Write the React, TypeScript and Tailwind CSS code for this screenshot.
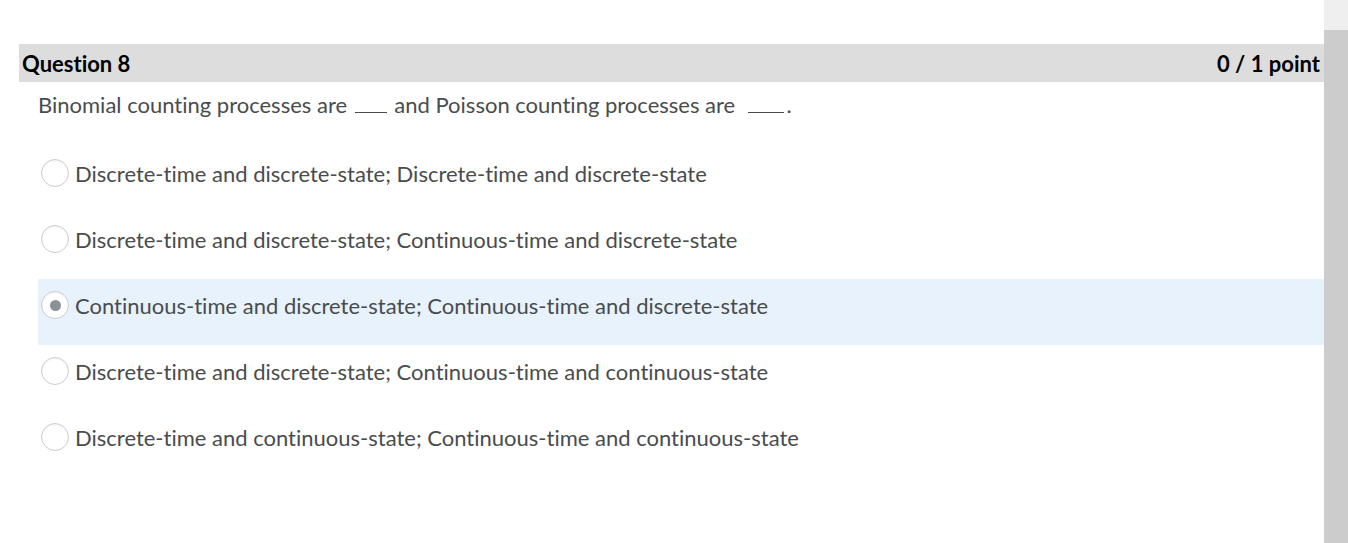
const options = [
  "Discrete-time and discrete-state; Discrete-time and discrete-state",
  "Discrete-time and discrete-state; Continuous-time and discrete-state",
  "Continuous-time and discrete-state; Continuous-time and discrete-state",
  "Discrete-time and discrete-state; Continuous-time and continuous-state",
  "Discrete-time and continuous-state; Continuous-time and continuous-state",
]

const selected = 2

const Radio = ({ checked }: { checked: boolean }) => (
  <span className="w-[28px] h-[28px] shrink-0 rounded-full border border-[#c9ced2] bg-white flex items-center justify-center shadow-[inset_0_1px_2px_rgba(0,0,0,0.06)]">
    {checked && <span className="w-[11px] h-[11px] rounded-full bg-[#8c9196]"></span>}
  </span>
)

const Blank = ({ w }: { w: string }) => (
  <span className={`inline-block mx-[2px] border-b border-[#494c4e] ${w}`}></span>
)

export default function App() {
  return (
    <div className="flex h-[543px] w-[1348px] overflow-hidden bg-white font-['Lato','Noto_Sans',sans-serif] [font-variant-ligatures:none]">
      <div className="flex-1 pt-[44px]">
        <div className="ml-[19px] h-[38px] bg-[#dddddd] flex items-center justify-between pl-[3px] pr-[4px]">
          <span className="text-[22px] font-bold text-black">Question 8</span>
          <span className="text-[22px] font-bold text-black">0 / 1 point</span>
        </div>
        <div className="ml-[38px] mt-[9px] text-[22px] leading-[28px] text-[#494c4e]">
          Binomial counting processes are <Blank w="w-[32px]" /> and Poisson counting processes are &nbsp;<Blank w="w-[36px]" />.
        </div>
        <div className="ml-[38px] mt-[28px]">
          {options.map((o, i) => (
            <div
              key={i}
              className={`h-[66px] flex items-center gap-[6px] pl-[3px] pb-[14px] ${i === selected ? "bg-[#e8f2fc]" : ""}`}
            >
              <Radio checked={i === selected} />
              <span className="text-[22px] text-[#494c4e]">{o}</span>
            </div>
          ))}
        </div>
      </div>
      <div className="w-[24px] flex flex-col">
        <div className="h-[30px] bg-[#efefef]"></div>
        <div className="flex-1 bg-[#cccccc]"></div>
      </div>
    </div>
  )
}
